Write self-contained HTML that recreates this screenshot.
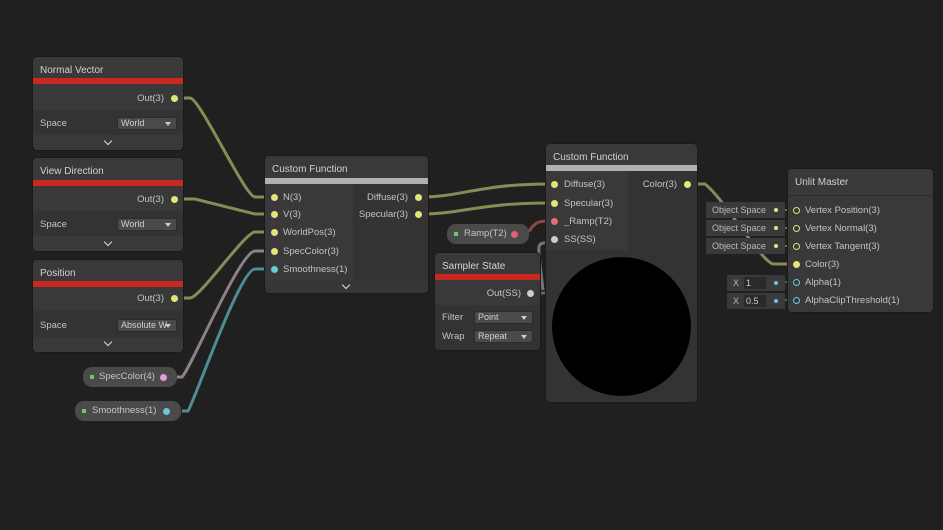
<!DOCTYPE html>
<html><head><meta charset="utf-8">
<style>
*{box-sizing:border-box;margin:0;padding:0}
body{width:943px;height:530px;background:#202020;position:relative;overflow:hidden;font-family:"Liberation Sans",sans-serif;font-size:9.5px;color:#c4c4c4}
.n{position:absolute;background:#393939;border-radius:4px;overflow:hidden;box-shadow:0 0 0 1px #1a1a1a}
.h{position:absolute;left:0;right:0;top:0;background:#393939;color:#d2d2d2;font-size:10px;padding-left:7px}
.bar{position:absolute;left:0;right:0;height:6px}
.t{position:absolute;white-space:nowrap}
.sec{position:absolute;left:0;right:0;background:#333}
.dot{position:absolute;width:7px;height:7px;border-radius:50%;}
.dd{position:absolute;background:#4a4a4a;border:1px solid #2c2c2c;border-radius:2px;color:#d0d0d0;font-size:9px;padding-left:3px;line-height:11px;height:13px}
.dd:after{content:"";position:absolute;right:5px;top:4px;border:3px solid transparent;border-top:4px solid #ccc}
.chev{position:absolute;width:6px;height:6px;border-right:1.5px solid #ddd;border-bottom:1.5px solid #ddd;transform:rotate(45deg)}
.pill{position:absolute;background:#4a4a4a;border-radius:9px;height:20px}
.box{position:absolute;background:#3a3a3a;height:16px;color:#bbb;font-size:9px;line-height:16px}
</style></head><body>
<svg width="943" height="530" style="position:absolute;left:0;top:0" fill="none" stroke-width="3">
<g stroke="#8a8a55">
<path d="M180 98 H190 C200 98 245 197 255 197 H268"/>
<path d="M180 199 H195 L255 214 H268"/>
<path d="M180 298 H190 C200 298 245 232 255 232 H268"/>
<path d="M422 197 C460 197 480 184 549 184"/>
<path d="M422 214 C460 214 480 203 549 203"/>
<path d="M692 184 H705 C725 200 760 260 773 264 H793"/>
</g>
<path d="M176 377 H182 C190 370 240 251 255 251 H268" stroke="#8e7f88"/>
<path d="M182 411 H188 C195 400 240 269 255 269 H268" stroke="#4f8c95"/>
<path d="M523 234 L530 230 C535 222 540 221 549 221" stroke="#8a4a4a"/>
<path d="M545 243 C535 242 540 255 540 265 L543 290" stroke="#777"/>
<path d="M535 293 H546" stroke="#666"/>
<g stroke="#6e6e45" stroke-width="2"><path d="M778 210 H795"/><path d="M778 228 H795"/><path d="M778 246 H795"/></g>
<g stroke="#3b6b70" stroke-width="2"><path d="M778 282 H795"/><path d="M778 300 H795"/></g>
</svg>

<div class="n" style="left:33px;top:57px;width:150px;height:93px">
 <div class="h" style="height:21px;line-height:27px">Normal Vector</div>
 <div class="bar" style="top:21px;background:#c8281f"></div>
 <div class="t" style="right:19px;top:36px">Out(3)</div>
 <div class="dot" style="right:5px;top:38px;background:#e4e47a"></div>
 <div class="sec" style="top:53px;height:25px"></div>
 <div class="t" style="left:7px;top:61px">Space</div>
 <div class="dd" style="left:84px;top:60px;width:60px">World</div>
 <div class="chev" style="left:72px;top:81px"></div>
</div>
<div class="n" style="left:33px;top:158px;width:150px;height:93px">
 <div class="h" style="height:22px;line-height:28px">View Direction</div>
 <div class="bar" style="top:22px;background:#c8281f"></div>
 <div class="t" style="right:19px;top:36px">Out(3)</div>
 <div class="dot" style="right:5px;top:38px;background:#e4e47a"></div>
 <div class="sec" style="top:53px;height:25px"></div>
 <div class="t" style="left:7px;top:61px">Space</div>
 <div class="dd" style="left:84px;top:60px;width:60px">World</div>
 <div class="chev" style="left:72px;top:81px"></div>
</div>
<div class="n" style="left:33px;top:260px;width:150px;height:92px">
 <div class="h" style="height:21px;line-height:27px">Position</div>
 <div class="bar" style="top:21px;background:#c8281f"></div>
 <div class="t" style="right:19px;top:33px">Out(3)</div>
 <div class="dot" style="right:5px;top:35px;background:#e4e47a"></div>
 <div class="sec" style="top:51px;height:26px"></div>
 <div class="t" style="left:7px;top:60px">Space</div>
 <div class="dd" style="left:84px;top:59px;width:60px;overflow:hidden">Absolute W</div>
 <div class="chev" style="left:72px;top:79px"></div>
</div>
<div class="n" style="left:265px;top:156px;width:163px;height:137px">
 <div class="h" style="height:22px;line-height:28px">Custom Function</div>
 <div class="bar" style="top:22px;background:#b0b0b0"></div>
 <div class="sec" style="top:28px;left:88px;height:96px;background:#333"></div>
 <div class="dot" style="left:6px;top:38px;background:#e4e47a"></div><div class="t" style="left:18px;top:36px">N(3)</div>
 <div class="dot" style="left:6px;top:55px;background:#e4e47a"></div><div class="t" style="left:18px;top:53px">V(3)</div>
 <div class="dot" style="left:6px;top:73px;background:#e4e47a"></div><div class="t" style="left:18px;top:71px">WorldPos(3)</div>
 <div class="dot" style="left:6px;top:92px;background:#e4e47a"></div><div class="t" style="left:18px;top:90px">SpecColor(3)</div>
 <div class="dot" style="left:6px;top:110px;background:#6cc8d8"></div><div class="t" style="left:18px;top:108px">Smoothness(1)</div>
 <div class="t" style="right:20px;top:36px">Diffuse(3)</div><div class="dot" style="right:6px;top:38px;background:#e4e47a"></div>
 <div class="t" style="right:20px;top:53px">Specular(3)</div><div class="dot" style="right:6px;top:55px;background:#e4e47a"></div>
 <div class="sec" style="top:124px;height:13px;background:#363636"></div>
 <div class="chev" style="left:78px;top:126px"></div>
</div>
<div class="n" style="left:546px;top:144px;width:151px;height:258px">
 <div class="h" style="height:21px;line-height:27px">Custom Function</div>
 <div class="bar" style="top:21px;background:#b0b0b0"></div>
 <div class="sec" style="top:27px;left:82px;height:79px;background:#333"></div>
 <div class="dot" style="left:5px;top:37px;background:#e4e47a"></div><div class="t" style="left:18px;top:35px">Diffuse(3)</div>
 <div class="dot" style="left:5px;top:56px;background:#e4e47a"></div><div class="t" style="left:18px;top:54px">Specular(3)</div>
 <div class="dot" style="left:5px;top:74px;background:#e07070"></div><div class="t" style="left:18px;top:72px">_Ramp(T2)</div>
 <div class="dot" style="left:5px;top:92px;background:#ccc"></div><div class="t" style="left:18px;top:90px">SS(SS)</div>
 <div class="t" style="right:20px;top:35px">Color(3)</div><div class="dot" style="right:6px;top:37px;background:#e4e47a"></div>
 <div class="sec" style="top:106px;height:152px;background:#333"></div>
 <div style="position:absolute;left:6px;top:113px;width:139px;height:139px;border-radius:50%;background:#000"></div>
</div>
<div class="n" style="left:435px;top:253px;width:105px;height:97px">
 <div class="h" style="height:21px;line-height:27px">Sampler State</div>
 <div class="bar" style="top:21px;background:#c8281f"></div>
 <div class="t" style="right:19px;top:35px">Out(SS)</div><div class="dot" style="right:6px;top:37px;background:#ccc"></div>
 <div class="sec" style="top:52px;height:45px"></div>
 <div class="t" style="left:7px;top:59px">Filter</div><div class="dd" style="left:39px;top:58px;width:59px">Point</div>
 <div class="t" style="left:7px;top:78px">Wrap</div><div class="dd" style="left:39px;top:77px;width:59px">Repeat</div>
</div>
<div class="pill" style="left:447px;top:224px;width:82px">
 <div style="position:absolute;left:7px;top:8px;width:4px;height:4px;background:#6c6"></div>
 <div class="t" style="left:17px;top:4px">Ramp(T2)</div>
 <div class="dot" style="left:64px;top:7px;background:#e06070"></div>
</div>
<div class="pill" style="left:83px;top:367px;width:94px">
 <div style="position:absolute;left:7px;top:8px;width:4px;height:4px;background:#6c6"></div>
 <div class="t" style="left:16px;top:4px">SpecColor(4)</div>
 <div class="dot" style="left:77px;top:7px;background:#e0a0e0"></div>
</div>
<div class="pill" style="left:75px;top:401px;width:106px">
 <div style="position:absolute;left:7px;top:8px;width:4px;height:4px;background:#6c6"></div>
 <div class="t" style="left:17px;top:4px">Smoothness(1)</div>
 <div class="dot" style="left:88px;top:7px;background:#6cc8d8"></div>
</div>
<div class="box" style="left:706px;top:202px;width:79px;padding-left:6px">Object Space<span style="position:absolute;right:7px;top:6px;width:4px;height:4px;border-radius:50%;background:#e4e47a"></span></div>
<div class="box" style="left:706px;top:220px;width:79px;padding-left:6px">Object Space<span style="position:absolute;right:7px;top:6px;width:4px;height:4px;border-radius:50%;background:#e4e47a"></span></div>
<div class="box" style="left:706px;top:238px;width:79px;padding-left:6px">Object Space<span style="position:absolute;right:7px;top:6px;width:4px;height:4px;border-radius:50%;background:#e4e47a"></span></div>
<div class="box" style="left:727px;top:275px;width:58px;padding-left:6px">X<span style="position:absolute;left:17px;top:2px;width:22px;height:12px;background:#2a2a2a;line-height:12px;padding-left:2px;color:#ccc">1</span><span style="position:absolute;right:7px;top:6px;width:4px;height:4px;border-radius:50%;background:#6cc8d8"></span></div>
<div class="box" style="left:727px;top:293px;width:58px;padding-left:6px">X<span style="position:absolute;left:17px;top:2px;width:22px;height:12px;background:#2a2a2a;line-height:12px;padding-left:2px;color:#ccc">0.5</span><span style="position:absolute;right:7px;top:6px;width:4px;height:4px;border-radius:50%;background:#6cc8d8"></span></div>
<div class="n" style="left:788px;top:169px;width:145px;height:143px">
 <div class="h" style="height:27px;line-height:27px;border-bottom:1px solid #2b2b2b">Unlit Master</div>
 <div class="dot" style="left:5px;top:38px;border:1.5px solid #e4e47a"></div><div class="t" style="left:17px;top:36px">Vertex Position(3)</div>
 <div class="dot" style="left:5px;top:56px;border:1.5px solid #e4e47a"></div><div class="t" style="left:17px;top:54px">Vertex Normal(3)</div>
 <div class="dot" style="left:5px;top:74px;border:1.5px solid #e4e47a"></div><div class="t" style="left:17px;top:72px">Vertex Tangent(3)</div>
 <div class="dot" style="left:5px;top:92px;background:#e4e47a"></div><div class="t" style="left:17px;top:90px">Color(3)</div>
 <div class="dot" style="left:5px;top:110px;border:1.5px solid #6cc8d8"></div><div class="t" style="left:17px;top:108px">Alpha(1)</div>
 <div class="dot" style="left:5px;top:128px;border:1.5px solid #6cc8d8"></div><div class="t" style="left:17px;top:126px">AlphaClipThreshold(1)</div>
</div>
</body></html>
